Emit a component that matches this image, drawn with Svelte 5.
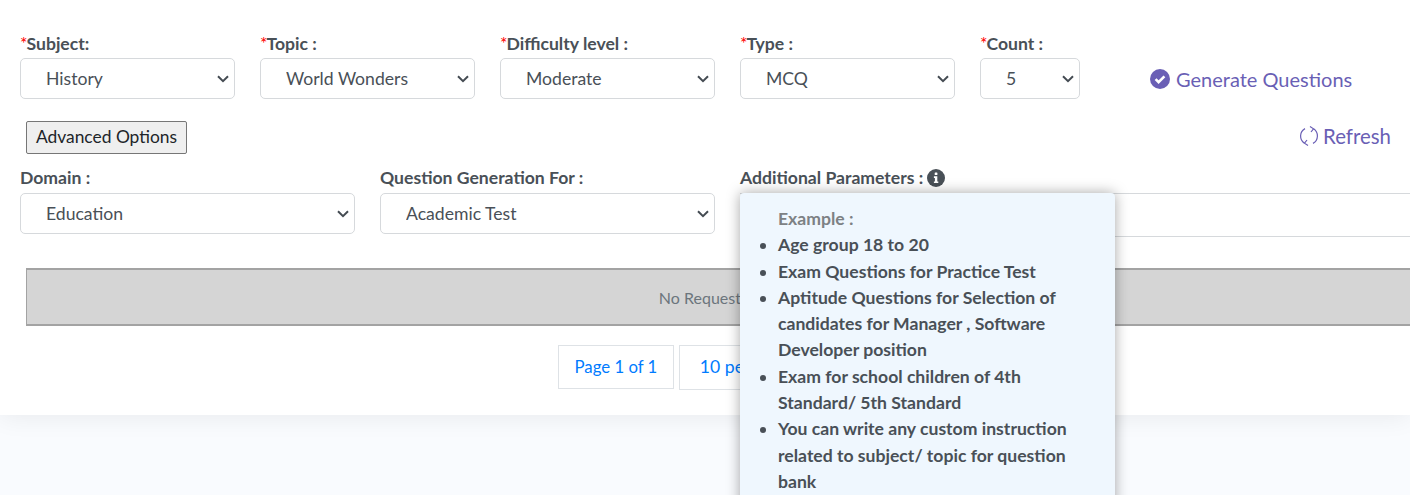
<script>
  const topFields = [
    { label: "Subject:", value: "History", options: ["History", "Geography", "Science"], cls: "wide" },
    { label: "Topic :", value: "World Wonders", options: ["World Wonders", "Ancient Empires"], cls: "wide" },
    { label: "Difficulty level :", value: "Moderate", options: ["Easy", "Moderate", "Hard"], cls: "wide" },
    { label: "Type :", value: "MCQ", options: ["MCQ", "Descriptive"], cls: "wide" },
    { label: "Count :", value: "5", options: ["5", "10", "15"], cls: "small" }
  ];

  const examples = [
    "Age group 18 to 20",
    "Exam Questions for Practice Test",
    "Aptitude Questions for Selection of candidates for Manager , Software Developer position",
    "Exam for school children of 4th Standard/ 5th Standard",
    "You can write any custom instruction related to subject/ topic for question bank"
  ];
</script>

<div class="page">
  <main class="panel">
    <div class="row top-row">
      {#each topFields as f}
        <div class="field {f.cls}">
          <label><span class="req">*</span>{f.label}</label>
          <select value={f.value}>
            {#each f.options as o}
              <option>{o}</option>
            {/each}
          </select>
        </div>
      {/each}
      <a class="generate" href="#top">
        <svg width="20" height="20" viewBox="0 0 20 20">
          <circle cx="10" cy="10" r="10" fill="#6a5fb5" />
          <path d="M5.6 10.2l3 3 5.8-5.8" fill="none" stroke="#fff" stroke-width="2.6" />
        </svg>
        Generate Questions
      </a>
    </div>

    <div class="options-row">
      <button class="advanced">Advanced Options</button>
      <a class="refresh" href="#top">
        <svg width="20" height="20" viewBox="0 0 20 20" fill="none" stroke="#6a5fb5" stroke-width="1.2">
          <path d="M6 2.6A8.5 8.5 0 0 0 5.5 17.2" />
          <path d="M14 17.4A8.5 8.5 0 0 0 14.5 2.8" />
          <path d="M11 0.5L14.5 2.8L12 6" />
          <path d="M9 19.5L5.5 17.2L8 14" />
        </svg>
        Refresh
      </a>
    </div>

    <div class="row second-row">
      <div class="field domain">
        <label>Domain :</label>
        <select><option>Education</option></select>
      </div>
      <div class="field generation">
        <label>Question Generation For :</label>
        <select><option>Academic Test</option></select>
      </div>
      <div class="field params">
        <label>
          Additional Parameters :
          <svg class="info" width="18" height="18" viewBox="0 0 18 18">
            <circle cx="9" cy="9" r="9" fill="#495057" />
            <rect x="7.7" y="3.4" width="2.7" height="2.6" rx="0.6" fill="#fff" />
            <path d="M6.9 7.3h3.4v5.2h1v1.6H6.9v-1.6h1v-3.6h-1z" fill="#fff" />
          </svg>
        </label>
        <input type="text" />
        <div class="tooltip">
          <p>Example :</p>
          <ul>
            {#each examples as e}
              <li>{e}</li>
            {/each}
          </ul>
        </div>
      </div>
    </div>

    <div class="empty">No Requests Found</div>

    <div class="pager">
      <span class="page-box">Page 1 of 1</span>
      <span class="page-box per">10 per page</span>
    </div>
  </main>
</div>

<style>
  :global(body) {
    margin: 0;
    background: #f9fbfe;
    overflow: hidden;
  }

  .page {
    width: 1410px;
    height: 495px;
    overflow: hidden;
    font-family: Lato, "Open Sans", sans-serif;
    font-size: 17.6px;
    color: #495057;
  }

  .panel {
    background: #fff;
    height: 415px;
    box-sizing: border-box;
    padding-top: 30px;
    box-shadow: 0 2px 24px rgba(0, 0, 0, 0.07);
  }

  .row {
    display: flex;
    gap: 25px;
    padding-left: 20px;
  }

  .field {
    display: flex;
    flex-direction: column;
    flex: none;
  }

  .field.wide {
    width: 215px;
  }

  .field.small {
    width: 100px;
  }

  .field.domain {
    width: 335px;
  }

  .field.generation {
    width: 335px;
  }

  .field.params {
    width: 700px;
    position: relative;
  }

  label {
    font-size: 17.6px;
    font-weight: 700;
    line-height: 24px;
    height: 28px;
    box-sizing: border-box;
    display: flex;
    align-items: center;
    gap: 3px;
    white-space: nowrap;
  }

  .second-row label {
    padding-bottom: 2px;
  }

  .info {
    margin-left: 1px;
  }

  .req {
    color: #f00;
    font-weight: 400;
    margin-right: -4px;
  }

  select {
    appearance: none;
    height: 41px;
    border: 1px solid #d6d9dc;
    border-radius: 5px;
    background: #fff url("data:image/svg+xml,%3Csvg xmlns='http://www.w3.org/2000/svg' width='12' height='8' viewBox='0 0 12 8'%3E%3Cpath d='M1 1.2l5 5 5-5' fill='none' stroke='%23454c53' stroke-width='2'/%3E%3C/svg%3E") no-repeat right 5.5px center;
    color: #495057;
    font-family: inherit;
    font-size: 17.6px;
    padding: 0 25px;
    box-sizing: border-box;
    width: 100%;
  }

  input {
    height: 44px;
    border: none;
    border-top: 1px solid #d6d9dc;
    border-bottom: 1px solid #d6d9dc;
    box-sizing: border-box;
    width: 100%;
    background: #fff;
  }

  .generate {
    display: flex;
    align-items: center;
    gap: 6px;
    margin: 37px 0 0 45px;
    height: 24px;
    color: #6a5fb5;
    font-size: 20px;
    text-decoration: none;
    white-space: nowrap;
  }

  .options-row {
    display: flex;
    justify-content: space-between;
    align-items: center;
    padding: 22px 19px 0 26px;
  }

  .advanced {
    height: 33px;
    width: 161px;
    padding: 0 0 2px;
    background: #efefef;
    border: 1px solid #767676;
    border-radius: 2px;
    font-family: inherit;
    font-size: 17.4px;
    color: #212529;
  }

  .refresh {
    display: flex;
    align-items: center;
    gap: 4px;
    margin-top: -3px;
    color: #6a5fb5;
    font-size: 20.4px;
    text-decoration: none;
  }

  .second-row {
    margin-top: 11px;
  }

  .tooltip {
    position: absolute;
    top: 28px;
    left: 0;
    width: 375px;
    height: 400px;
    box-sizing: border-box;
    padding: 13px 38px 0;
    background: #eff7fe;
    border-radius: 4px;
    box-shadow: 0 0 14px rgba(0, 0, 0, 0.35);
    font-size: 17.6px;
    font-weight: 700;
    line-height: 26.3px;
  }

  .tooltip p {
    margin: 0;
    color: #7d8184;
  }

  .tooltip ul {
    margin: 0;
    padding: 0;
  }

  .empty {
    margin: 31px -18px 0 26px;
    height: 58px;
    box-sizing: border-box;
    background: #d5d5d5;
    border-top: 2px solid #a3a3a3;
    border-bottom: 2px solid #a3a3a3;
    border-left: 1px solid #a3a3a3;
    display: flex;
    align-items: center;
    justify-content: center;
    font-size: 16px;
    color: #6c757d;
  }

  .pager {
    display: flex;
    gap: 5px;
    margin: 19px 0 0 558px;
  }

  .page-box {
    height: 44px;
    box-sizing: border-box;
    border: 1px solid #dee2e6;
    display: flex;
    align-items: center;
    padding: 0 15.5px 2px;
    color: #007bff;
    font-size: 16.8px;
    background: #fff;
  }

  .page-box.per {
    height: 45px;
    width: 173px;
    padding: 0 20px 2px;
    font-size: 17.6px;
  }
</style>
